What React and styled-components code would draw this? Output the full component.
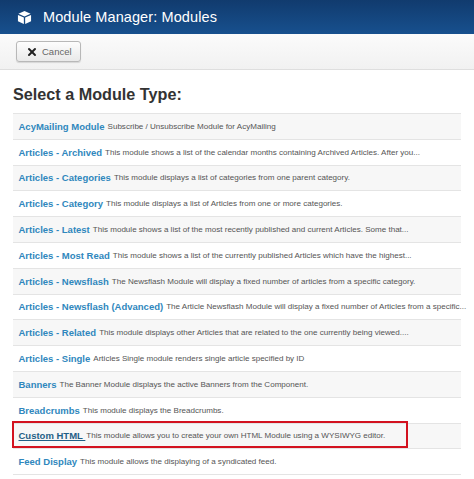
import styled, { createGlobalStyle } from "styled-components";
import { X } from "lucide-react";

const Global = createGlobalStyle`
  html, body {
    margin: 0;
    padding: 0;
    background: #fff;
    font-family: "Liberation Sans", Arial, sans-serif;
  }
`;

const Page = styled.div`
  width: 474px;
  height: 479px;
  overflow: hidden;
`;

const Header = styled.header`
  height: 34px;
  display: flex;
  align-items: center;
  gap: 11px;
  padding-left: 17px;
  background: linear-gradient(to bottom, #113b6e, #17508e);
  color: #fff;
`;

const Title = styled.h1`
  margin: 0;
  font-size: 14.5px;
  font-weight: normal;
  letter-spacing: 0.1px;
`;

const Toolbar = styled.div`
  height: 36px;
  box-sizing: border-box;
  padding: 7px 16px 0;
  background: linear-gradient(to bottom, #fbfbfb, #f1f1f1);
  border-bottom: 1px solid #dedede;
`;

const Button = styled.button`
  width: 65px;
  height: 21px;
  padding: 0 0 0 9px;
  display: flex;
  align-items: center;
  gap: 4px;
  border: 1px solid #b8b8b8;
  border-radius: 3px;
  background: linear-gradient(to bottom, #fdfdfd, #e9e9e9);
  box-shadow: 0 1px 1px rgba(0, 0, 0, 0.12);
  font-family: inherit;
  font-size: 9.5px;
  color: #666;
`;

const Content = styled.main`
  padding: 15px 13px 0;
`;

const Heading = styled.h2`
  margin: 0 0 9px;
  font-size: 16.2px;
  line-height: 19px;
  font-weight: bold;
  color: #333;
`;

const List = styled.ul`
  list-style: none;
  margin: 0;
  padding: 0;
  border-bottom: 1px solid #e4e4e4;
`;

const Row = styled.li`
  position: relative;
  height: 25.8px;
  box-sizing: border-box;
  padding-left: 5.5px;
  display: flex;
  align-items: center;
  white-space: pre;
  border-top: 1px solid #e4e4e4;
  background: ${(p) => (p.$striped ? "#f7f7f7" : "#fff")};
`;

const Name = styled.a`
  font-size: 9.5px;
  font-weight: bold;
  color: ${(p) => (p.$active ? "#1f5f86" : "#2f87bd")};
  text-decoration: ${(p) => (p.$active ? "underline" : "none")};
`;

const Description = styled.span`
  margin-left: ${(p) => (p.$active ? "1px" : "3px")};
  font-size: 8.05px;
  color: #555;
`;

const Highlight = styled.div`
  position: absolute;
  left: -1.5px;
  top: -3px;
  width: 396.5px;
  height: 27.5px;
  box-sizing: border-box;
  border: 2px solid #d3121f;
`;

const modules = [
  ["AcyMailing Module", "Subscribe / Unsubscribe Module for AcyMailing"],
  ["Articles - Archived", "This module shows a list of the calendar months containing Archived Articles. After you..."],
  ["Articles - Categories", "This module displays a list of categories from one parent category."],
  ["Articles - Category", "This module displays a list of Articles from one or more categories."],
  ["Articles - Latest", "This module shows a list of the most recently published and current Articles. Some that..."],
  ["Articles - Most Read", "This module shows a list of the currently published Articles which have the highest..."],
  ["Articles - Newsflash", "The Newsflash Module will display a fixed number of articles from a specific category."],
  ["Articles - Newsflash (Advanced)", "The Article Newsflash Module will display a fixed number of Articles from a specific..."],
  ["Articles - Related", "This module displays other Articles that are related to the one currently being viewed...."],
  ["Articles - Single", "Articles Single module renders single article specified by ID"],
  ["Banners", "The Banner Module displays the active Banners from the Component."],
  ["Breadcrumbs", "This module displays the Breadcrumbs."],
  ["Custom HTML", "This module allows you to create your own HTML Module using a WYSIWYG editor."],
  ["Feed Display", "This module allows the displaying of a syndicated feed."],
];

function CubeIcon() {
  return (
    <svg width="15" height="15" viewBox="0 0 16 16" fill="#fff">
      <path d="M8 1 L14.5 4 L8 6.8 L1.5 4 Z" />
      <path d="M1 5.2 L7.3 8 V15 L1 12 Z" />
      <path d="M15 5.2 L8.7 8 V15 L15 12 Z" />
    </svg>
  );
}

export default function App() {
  return (
    <Page>
      <Global />
      <Header>
        <CubeIcon />
        <Title>Module Manager: Modules</Title>
      </Header>
      <Toolbar>
        <Button>
          <X size={12} strokeWidth={4} color="#222" />
          Cancel
        </Button>
      </Toolbar>
      <Content>
        <Heading>Select a Module Type:</Heading>
        <List>
          {modules.map(([name, text], i) => {
            const active = name === "Custom HTML";
            return (
              <Row key={name} $striped={i % 2 === 0}>
                <Name $active={active}>{active ? `${name} ` : name}</Name>
                <Description $active={active}>{text}</Description>
                {active && <Highlight />}
              </Row>
            );
          })}
        </List>
      </Content>
    </Page>
  );
}
